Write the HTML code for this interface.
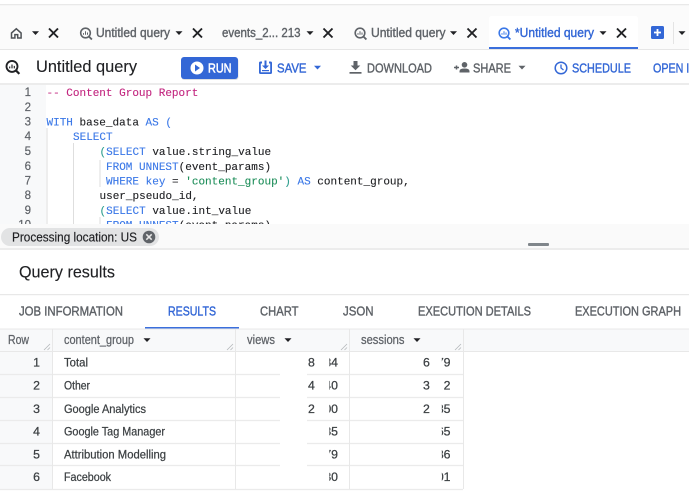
<!DOCTYPE html>
<html lang="en"><head><meta charset="utf-8"><title>Untitled query</title>
<style>
html,body{margin:0;padding:0;background:#fff;width:689px;height:500px;overflow:hidden}
svg{display:block;filter:blur(.25px)}
text{font-family:"Liberation Sans",Arial,sans-serif}
.g{fill:#5f6368;font-size:12.5px;stroke:#5f6368;stroke-width:.38}
.b{fill:#3367d6;font-size:12.5px;stroke:#3367d6;stroke-width:.38}
.d{fill:#3c4043;font-size:12.3px;stroke:#3c4043;stroke-width:.25}
.k{fill:#202124;stroke:#202124;stroke-width:.12}
.code text{font-family:"Liberation Mono",monospace;font-size:11px;fill:#202124;white-space:pre;stroke:currentColor;stroke-width:.12;color:#202124}
.kw{fill:#3b78e7;stroke:#3b78e7}.cm{fill:#c2257f}.st{fill:#1e8e5a;stroke:#1e8e5a}.te{fill:#2f9e8f;stroke:#2f9e8f}
.ln{fill:#5f6368;font-size:11.5px;text-anchor:end;stroke:#5f6368;stroke-width:.2}
.x{stroke:#202124;stroke-width:1.9;fill:none}
</style></head><body>
<svg width="689" height="500" viewBox="0 0 689 500" xmlns="http://www.w3.org/2000/svg">
<defs>
<g id="mag"><circle cx="0" cy="-.5" r="4.8" fill="none" stroke-width="1.600" stroke="currentColor"/><path d="M3.400 3l3 3" stroke-width="1.900" stroke="currentColor"/><path d="M-2 1.200v-1.600M0 1.200v-3.400M2 1.200v-2.200" stroke-width="1" stroke="currentColor"/></g>
<path id="car" d="M-3.500-1.800h7L0 2z"/>
<path id="xx" d="M-4.500-4.500l9 9M4.500-4.500l-9 9" class="x"/>
<clipPath id="ed"><rect x="0" y="85" width="689" height="139"/></clipPath>
<clipPath id="open"><rect x="640" y="50" width="49" height="33"/></clipPath>
<g id="grip" stroke="#b5b8bb" stroke-width=".8"><path d="M-6 0l6-6M-2.500 0L0-2.500"/></g>
</defs>

<!-- tab bar -->
<rect width="689" height="50" fill="#fbfbfb"/>
<rect width="689" height="4" fill="#fff"/>
<rect y="4" width="689" height="1.300" fill="#e9e9e9"/>
<rect y="49" width="689" height="1.200" fill="#e6e6e6"/>
<path d="M489 49V19q0-3 3-3h143q3 0 3 3v30z" fill="#fff"/>
<rect x="489" y="47" width="149" height="2" fill="#3b6fdc"/>

<path d="M11.500 33l4.800-4.200 4.800 4.200v5h-3.400v-3.400h-2.800V38h-3.400z" fill="none" stroke="#4f5357" stroke-width="1.500"/>
<use href="#car" x="35.500" y="33" fill="#202124"/><use href="#xx" x="53.500" y="33"/>

<use href="#mag" x="85.500" y="33.500" color="#5f6368"/>
<text x="96" y="37" class="g" textLength="74" lengthAdjust="spacingAndGlyphs">Untitled query</text>
<use href="#car" x="179" y="33" fill="#202124"/><use href="#xx" x="197.500" y="33"/>

<text x="222" y="37" class="g" textLength="78.500" lengthAdjust="spacingAndGlyphs">events_2... 213</text>
<use href="#car" x="310" y="33" fill="#202124"/><use href="#xx" x="328" y="33"/>

<use href="#mag" x="360" y="33.500" color="#5f6368"/>
<text x="371" y="37" class="g" textLength="74.500" lengthAdjust="spacingAndGlyphs">Untitled query</text>
<use href="#car" x="453.500" y="33" fill="#202124"/><use href="#xx" x="472" y="33"/>

<use href="#mag" x="504" y="33.500" color="#3b78e7"/>
<text x="515" y="37" class="b" textLength="79" lengthAdjust="spacingAndGlyphs">*Untitled query</text>
<use href="#car" x="603" y="33" fill="#202124"/><use href="#xx" x="621.500" y="33"/>

<rect x="651" y="26" width="13" height="13" rx="1.500" fill="#3367d6"/>
<path d="M657.500 29v7M654 32.500h7" stroke="#fff" stroke-width="1.800"/>
<rect x="673" y="22" width="1" height="22" fill="#e4e4e4"/>
<use href="#car" x="682" y="33" fill="#202124"/>

<!-- toolbar -->
<rect y="50" width="689" height="33" fill="#fff"/>
<rect y="83" width="689" height="2" fill="#ececec"/>
<g transform="translate(12 67) scale(1.150)" color="#202124"><use href="#mag"/></g>
<text x="36" y="72" class="k" font-size="17" textLength="101" lengthAdjust="spacingAndGlyphs">Untitled query</text>

<rect x="181.500" y="58" width="57" height="22" rx="3" fill="#9aa0a6" opacity=".35"/>
<rect x="181" y="57" width="57" height="22" rx="3" fill="#3367d6"/>
<circle cx="197" cy="68" r="6.500" fill="#fff"/><path d="M195 64.500l5 3.500-5 3.500z" fill="#3367d6"/>
<text x="208" y="72.500" font-size="12.500" fill="#fff" stroke="#fff" stroke-width=".5" textLength="23.500" lengthAdjust="spacingAndGlyphs">RUN</text>

<path d="M262 61.500h-1.500q-1.500 0-1.500 1.500v9.500q0 1.500 1.500 1.500h10q1.500 0 1.500-1.500V63q0-1.500-1.500-1.500H269v2h1.200v8.800h-9.400v-8.800h1.200z" fill="#3367d6"/>
<path d="M264.500 60.500h2v5h2.500l-3.500 3.500-3.500-3.500h2.500z" fill="#3367d6"/><rect x="262" y="70" width="7" height="1.200" fill="#3367d6"/>
<text x="277" y="72.500" class="b" textLength="29.500" lengthAdjust="spacingAndGlyphs">SAVE</text>
<use href="#car" x="317.500" y="67.500" fill="#3367d6"/>

<path d="M353.500 61h4v4.500h2.800l-4.800 4.800-4.800-4.800h2.800z" fill="#5f6368"/><rect x="349.500" y="72" width="12" height="1.700" fill="#5f6368"/>
<text x="367" y="72.500" class="g" textLength="65" lengthAdjust="spacingAndGlyphs">DOWNLOAD</text>

<path d="M454 67.500h5M456.500 65.500v4" stroke="#5f6368" stroke-width="1.500"/>
<circle cx="464.500" cy="64.800" r="2.800" fill="#5f6368"/><path d="M459.500 72.500v-1.300q0-2.700 5-2.700t5 2.700v1.300z" fill="#5f6368"/>
<text x="473" y="72.500" class="g" textLength="38" lengthAdjust="spacingAndGlyphs">SHARE</text>
<use href="#car" x="522" y="67.500" fill="#5f6368"/>

<circle cx="561" cy="68" r="5.800" fill="none" stroke="#3367d6" stroke-width="1.500"/><path d="M561 64.500V68l2.500 2" fill="none" stroke="#3367d6" stroke-width="1.300"/>
<text x="572" y="72.500" class="b" textLength="59" lengthAdjust="spacingAndGlyphs">SCHEDULE</text>
<g clip-path="url(#open)"><text x="653" y="72.500" class="b" textLength="44" lengthAdjust="spacingAndGlyphs">OPEN IN</text></g>

<!-- editor -->
<rect y="85" width="46" height="139" fill="#f8f9fa"/>
<g clip-path="url(#ed)">
<path d="M47 128v96M73.500 143v81M100 160v27M100 217v7" stroke="#dedede" stroke-width="1"/>
<g class="ln">
<text x="31" y="96">1</text><text x="31" y="111">2</text><text x="31" y="125.500">3</text><text x="31" y="140">4</text><text x="31" y="155">5</text><text x="31" y="170">6</text><text x="31" y="184.500">7</text><text x="31" y="199">8</text><text x="31" y="214">9</text><text x="31" y="228.500">10</text>
</g>
<g class="code">
<text x="46.500" y="96" style="fill:#c2257f;stroke:#c2257f">-- Content Group Report</text>
<text x="46.500" y="125.500"><tspan class="kw">WITH</tspan> base_data <tspan class="kw">AS</tspan> <tspan class="kw">(</tspan></text>
<text x="73" y="140" style="fill:#3b78e7;stroke:#3b78e7">SELECT</text>
<text x="99.500" y="155"><tspan class="te">(</tspan><tspan class="kw">SELECT</tspan> value.string_value</text>
<text x="106" y="170"><tspan class="kw">FROM</tspan> <tspan class="kw">UNNEST</tspan>(event_params)</text>
<text x="106" y="184.500"><tspan class="kw">WHERE</tspan> <tspan class="kw">key</tspan> = <tspan class="st">'content_group'</tspan><tspan class="te">)</tspan> <tspan class="kw">AS</tspan> content_group,</text>
<text x="99.500" y="199">user_pseudo_id,</text>
<text x="99.500" y="214"><tspan class="te">(</tspan><tspan class="kw">SELECT</tspan> value.int_value</text>
<text x="106" y="228.500"><tspan class="kw">FROM</tspan> <tspan class="kw">UNNEST</tspan>(event_params)</text>
</g>
</g>

<!-- processing bar -->
<rect y="224" width="689" height="24" fill="#fafafa"/>
<rect y="248" width="689" height="2" fill="#ececec"/>
<rect x="1" y="228" width="158" height="18" rx="9" fill="#e2e3e4"/>
<text x="12" y="241.500" font-size="12.500" fill="#202124" stroke="#202124" stroke-width=".15" textLength="125" lengthAdjust="spacingAndGlyphs">Processing location: US</text>
<circle cx="149" cy="237" r="6.300" fill="#5f6368"/>
<path d="M146.300 234.300l5.400 5.400M151.700 234.300l-5.400 5.400" stroke="#e8e8e8" stroke-width="1.500"/>
<rect x="528" y="243" width="21" height="3" rx="1" fill="#80868b"/>

<!-- results -->
<text x="19" y="277.500" class="k" font-size="16.500" textLength="96" lengthAdjust="spacingAndGlyphs">Query results</text>
<rect y="294" width="689" height="1.200" fill="#e8e8e8"/>
<g>
<text x="19" y="315.500" class="g" textLength="104" lengthAdjust="spacingAndGlyphs">JOB INFORMATION</text>
<text x="168" y="315.500" class="b" textLength="48" lengthAdjust="spacingAndGlyphs">RESULTS</text>
<text x="260" y="315.500" class="g" textLength="38.500" lengthAdjust="spacingAndGlyphs">CHART</text>
<text x="343" y="315.500" class="g" textLength="30.500" lengthAdjust="spacingAndGlyphs">JSON</text>
<text x="418" y="315.500" class="g" textLength="113" lengthAdjust="spacingAndGlyphs">EXECUTION DETAILS</text>
<text x="575" y="315.500" class="g" textLength="106" lengthAdjust="spacingAndGlyphs">EXECUTION GRAPH</text>
</g>
<rect x="145" y="327" width="94" height="2" fill="#3b6fdc"/>

<!-- table header -->
<rect y="329" width="689" height="22" fill="#f8f9fa"/>
<rect y="328.500" width="689" height="1" fill="#e8e8e8"/>
<rect y="351" width="689" height="1" fill="#e8e8e8"/>
<text x="8" y="344" class="g" textLength="21" lengthAdjust="spacingAndGlyphs" style="stroke-width:.25">Row</text>
<text x="64" y="344" class="g" textLength="70" lengthAdjust="spacingAndGlyphs" style="stroke-width:.25">content_group</text>
<use href="#car" x="147" y="340" fill="#202124"/>
<text x="247" y="344" class="g" textLength="28" lengthAdjust="spacingAndGlyphs" style="stroke-width:.25">views</text>
<use href="#car" x="288" y="340" fill="#202124"/>
<text x="361" y="344" class="g" textLength="43.500" lengthAdjust="spacingAndGlyphs" style="stroke-width:.25">sessions</text>
<use href="#car" x="417" y="340" fill="#202124"/>
<use href="#grip" x="50" y="350"/><use href="#grip" x="233" y="350"/><use href="#grip" x="347" y="350"/><use href="#grip" x="461" y="350"/>

<!-- rows -->
<rect y="352" width="52" height="137" fill="#f8f9fa"/>
<path d="M0 374.500h280M307 374.500h156M0 397.500h280M307 397.500h156M0 420.500h280M307 420.500h156M0 443.500h280M307 443.500h156M0 465.500h280M307 465.500h156M0 489.500h463" stroke="#ebebeb" stroke-width="1.200"/>
<path d="M52.500 329v160M235.500 329v160M349.500 329v160M463.500 329v160" stroke="#e8e8e8" stroke-width="1"/>

<g class="d" text-anchor="end">
<text x="40" y="366.500">1</text><text x="40" y="389.500">2</text><text x="40" y="413">3</text><text x="40" y="435.500">4</text><text x="40" y="458.500">5</text><text x="40" y="481">6</text>
</g>
<text x="64" y="366.500" class="d" textLength="24" lengthAdjust="spacingAndGlyphs">Total</text>
<text x="64" y="389.500" class="d" textLength="26" lengthAdjust="spacingAndGlyphs">Other</text>
<text x="64" y="413" class="d" textLength="82" lengthAdjust="spacingAndGlyphs">Google Analytics</text>
<text x="64" y="435.500" class="d" textLength="101" lengthAdjust="spacingAndGlyphs">Google Tag Manager</text>
<text x="64" y="458.500" class="d" textLength="102" lengthAdjust="spacingAndGlyphs">Attribution Modelling</text>
<text x="64" y="481" class="d" textLength="47" lengthAdjust="spacingAndGlyphs">Facebook</text>

<!-- masked numbers -->
<g class="d" text-anchor="end">
<text x="338" y="366.500">34</text><text x="338" y="389.500">40</text><text x="338" y="413">00</text><text x="338" y="435.500">35</text><text x="338" y="458.500">79</text><text x="338" y="481">30</text>
<text x="450.500" y="366.500">79</text><text x="450.500" y="389.500">2</text><text x="450.500" y="413">35</text><text x="450.500" y="435.500">65</text><text x="450.500" y="458.500">36</text><text x="450.500" y="481">01</text>
</g>
<g fill="#fff">
<rect x="320" y="354" width="9.300" height="18"/><rect x="320" y="377" width="9.300" height="18"/><rect x="320" y="400" width="9.300" height="18"/><rect x="320" y="423" width="9.300" height="18"/><rect x="320" y="446" width="9.300" height="18"/><rect x="320" y="469" width="9.300" height="18"/>
<rect x="433" y="354" width="8.800" height="18"/><rect x="433" y="400" width="8.800" height="18"/><rect x="433" y="423" width="8.800" height="18"/><rect x="433" y="446" width="8.800" height="18"/><rect x="433" y="469" width="8.800" height="18"/>
</g>
<g class="d">
<text x="308" y="366.500">8</text><text x="308" y="389.500">4</text><text x="308" y="413">2</text>
<text x="423" y="366.500">6</text><text x="423" y="389.500">3</text><text x="423" y="413">2</text>
</g>
</svg>
</body></html>
